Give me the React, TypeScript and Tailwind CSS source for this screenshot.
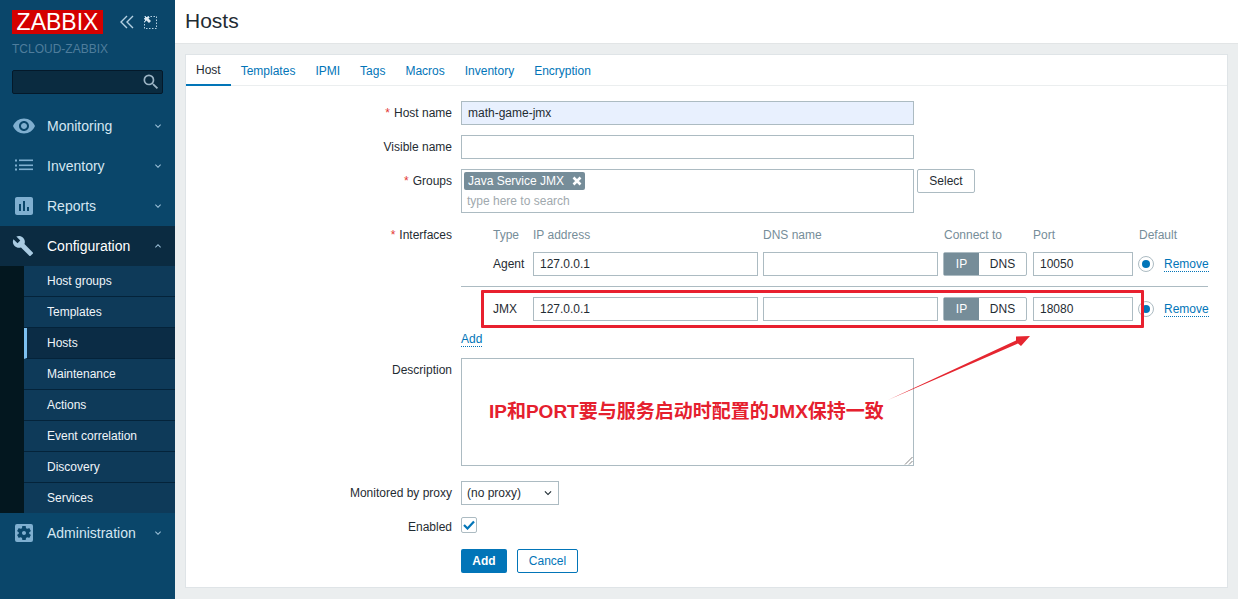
import React from "react";
import { MdVisibility, MdAssessment, MdBuild, MdSettingsApplications, MdKeyboardArrowDown, MdKeyboardArrowUp, MdSearch } from "react-icons/md";

const font = { fontFamily: '"Liberation Sans", Arial, sans-serif' };

function ListIcon() {
  return (
    <svg width="24" height="24" viewBox="0 0 24 24" fill="currentColor">
      <rect x="3" y="5.5" width="2" height="2" />
      <rect x="3" y="10.5" width="2" height="2" />
      <rect x="3" y="14.5" width="2" height="2" />
      <rect x="7" y="5.5" width="14" height="1.6" />
      <rect x="7" y="10.5" width="14" height="1.6" />
      <rect x="7" y="14.5" width="14" height="1.6" />
    </svg>
  );
}

function TopItem({ icon, label, open }: { icon: React.ReactNode; label: string; open?: boolean }) {
  return (
    <div className={`flex h-10 items-center ${open ? "bg-[#0b2b41] text-white" : "text-[#d5e6f2]"}`}>
      <div className="flex w-[47px] justify-start pl-[12px] text-[#7fafd0]">{icon}</div>
      <span className="flex-1 text-[14px]">{label}</span>
      <span className="mr-[11px] text-[#9cc0d8]">{open ? <MdKeyboardArrowUp size={12} /> : <MdKeyboardArrowDown size={12} />}</span>
    </div>
  );
}

function SubItem({ label, active, last }: { label: string; active?: boolean; last?: boolean }) {
  return (
    <div className={`flex items-center text-[12px] text-[#f0f5f9] ${last ? "h-[30px]" : "h-[31px] border-b border-[#04233a]"} ${active ? "border-l-[3px] border-l-[#7cc0f0] bg-[#0b2c45] pl-[20px]" : "bg-[#0e3a59] pl-[23px]"}`}>
      {label}
    </div>
  );
}

function Sidebar() {
  const subs = ["Host groups", "Templates", "Hosts", "Maintenance", "Actions", "Event correlation", "Discovery", "Services"];
  return (
    <aside className="flex w-[175px] shrink-0 flex-col bg-[#0a466a]">
      <div className="flex h-[70px] flex-col pl-[12px] pt-[10px]">
        <div className="flex items-center">
          <div className="flex h-[24px] w-[91px] items-center justify-center bg-[#d40000] text-[23px] leading-none text-white">ZABBIX</div>
          <svg className="ml-[17px]" width="14" height="14" viewBox="0 0 14 14" fill="none" stroke="#b5d0e2" strokeWidth="1.4">
            <path d="M7 1 L1 7 L7 13 M13 1 L7 7 L13 13" />
          </svg>
          <svg className="ml-[10px]" width="13" height="13" viewBox="0 0 13 13" fill="none">
            <rect x="0.5" y="0.5" width="12" height="12" stroke="#b5d0e2" strokeDasharray="1.5 1.5" />
            <path d="M1 1 H6 L4.5 2.5 L7 5 L5 7 L2.5 4.5 L1 6 Z" fill="#dbe8f1" />
          </svg>
        </div>
        <div className="mt-[8px] text-[12px] leading-[14px] text-[#4f7d9c]">TCLOUD-ZABBIX</div>
      </div>
      <div className="mx-[12px] flex h-[24px] items-center justify-end rounded-[2px] border border-[#04192a] bg-[#0a2b40] pr-[1px] text-[#9cb4c4]">
        <MdSearch size={20} />
      </div>
      <nav className="mt-[12px]">
        <TopItem icon={<MdVisibility size={24} />} label="Monitoring" />
        <TopItem icon={<ListIcon />} label="Inventory" />
        <TopItem icon={<MdAssessment size={24} />} label="Reports" />
        <TopItem icon={<MdBuild size={22} className="text-[#a9cbe2]" />} label="Configuration" open />
        <div className="flex bg-[#03171f] pl-[24px]">
          <div className="flex-1">
            {subs.map((s, i) => (
              <SubItem key={s} label={s} active={s === "Hosts"} last={i === subs.length - 1} />
            ))}
          </div>
        </div>
        <TopItem icon={<MdSettingsApplications size={24} />} label="Administration" />
      </nav>
    </aside>
  );
}

function Row({ label, req, className, labelPad, children }: { label: string; req?: boolean; className?: string; labelPad?: string; children: React.ReactNode }) {
  return (
    <div className={`flex ${className ?? ""}`}>
      <div className={`mr-[9px] w-[266px] shrink-0 text-right text-[12px] leading-[14px] text-[#1f2c33] ${labelPad ?? "pt-[5px]"}`}>
        {req && <span className="mr-[4px] text-[#e33734]">*</span>}
        {label}
      </div>
      <div className="flex-1">{children}</div>
    </div>
  );
}

function Text({ value, w, bg }: { value?: string; w: string; bg?: string }) {
  return <div className={`flex h-[24px] shrink-0 items-center border border-[#acbbc2] px-[6px] text-[12px] text-[#1f2c33] ${w} ${bg ?? "bg-white"}`}>{value}</div>;
}

function IfaceRow({ type, ip, port }: { type: string; ip: string; port: string }) {
  return (
    <div className="flex h-[24px] items-center pl-[32px]">
      <div className="w-[40px] shrink-0 text-[12px] text-[#1f2c33]">{type}</div>
      <Text value={ip} w="w-[225px]" />
      <Text w="w-[175px] ml-[5px]" />
      <div className="ml-[5px] flex h-[24px] w-[84px] shrink-0 rounded-[2px] border border-[#acbbc2] text-[12px]">
        <div className="flex w-[35px] items-center justify-center bg-[#768d99] text-white">IP</div>
        <div className="flex flex-1 items-center justify-center text-[#1f2c33]">DNS</div>
      </div>
      <Text value={port} w="w-[100px] ml-[6px]" />
      <div className="ml-[5px] flex h-[16px] w-[16px] shrink-0 items-center justify-center rounded-full border border-[#acbbc2] bg-white">
        <div className="h-[8px] w-[8px] rounded-full bg-[#0275b8]" />
      </div>
      <span className="ml-[10px] shrink-0 border-b border-dotted border-[#0275b8] text-[12px] leading-[14px] text-[#0275b8]">Remove</span>
    </div>
  );
}

function Form() {
  return (
    <div className="relative pt-[15px]">
      <Row label="Host name" req>
        <Text value="math-game-jmx" w="w-[453px]" bg="bg-[#e8f0fe]" />
      </Row>
      <Row label="Visible name" className="mt-[10px]">
        <Text w="w-[453px]" />
      </Row>
      <Row label="Groups" req className="mt-[10px]">
        <div className="flex">
          <div className="h-[44px] w-[453px] border border-[#acbbc2] px-[2px] pt-[2px] text-[12px]">
            <div className="flex h-[18px] w-[121px] items-center justify-between rounded-[2px] bg-[#768d99] pl-[4px] pr-[3px] text-white">
              <span>Java Service JMX</span>
              <svg width="10" height="10" viewBox="0 0 10 10" stroke="white" strokeWidth="2.6" fill="none">
                <path d="M1.5 1.5 L8.5 8.5 M8.5 1.5 L1.5 8.5" />
              </svg>
            </div>
            <div className="mt-[4px] pl-[3px] leading-[14px] text-[#9fa9ae]">type here to search</div>
          </div>
          <div className="ml-[3px] flex h-[24px] w-[58px] items-center justify-center rounded-[2px] border border-[#acbbc2] text-[12px] text-[#1f2c33]">Select</div>
        </div>
      </Row>
      <Row label="Interfaces" req className="mt-[10px]">
        <div className="w-[747px]">
          <div className="flex h-[22px] items-center pl-[32px] pt-[2px] text-[12px] leading-[14px] text-[#768d99]">
            <div className="w-[40px]">Type</div>
            <div className="w-[230px]">IP address</div>
            <div className="w-[181px]">DNS name</div>
            <div className="w-[89px]">Connect to</div>
            <div className="w-[106px]">Port</div>
            <div>Default</div>
          </div>
          <div className="mt-[7px]" />
          <IfaceRow type="Agent" ip="127.0.0.1" port="10050" />
          <div className="mb-[10px] mt-[10px] border-t border-[#acbbc2]" />
          <IfaceRow type="JMX" ip="127.0.0.1" port="18080" />
          <div className="mt-[11px] text-[12px] leading-[14px]">
            <span className="border-b border-dotted border-[#0275b8] text-[#0275b8]">Add</span>
          </div>
        </div>
      </Row>
      <Row label="Description" className="mt-[12px]">
        <div className="relative h-[108px] w-[453px] border border-[#acbbc2] bg-white">
          <svg className="absolute bottom-0 right-0" width="9" height="9" viewBox="0 0 9 9" stroke="#666" strokeWidth="0.8">
            <path d="M1 8.5 L8.5 1 M5 8.5 L8.5 5" />
          </svg>
        </div>
      </Row>
      <Row label="Monitored by proxy" className="mt-[15px]">
        <div className="flex h-[24px] w-[98px] items-center justify-between border border-[#acbbc2] pl-[5px] pr-[3px] text-[12px] text-[#1f2c33]">
          (no proxy)
          <MdKeyboardArrowDown size={14} />
        </div>
      </Row>
      <Row label="Enabled" className="mt-[12px]" labelPad="pt-[3px]">
        <div className="flex h-[16px] w-[16px] items-center justify-center rounded-[2px] border border-[#acbbc2]">
          <svg width="12" height="10" viewBox="0 0 12 10" fill="none" stroke="#0275b8" strokeWidth="2.2">
            <path d="M1 5 L4.5 8.5 L11 1.5" />
          </svg>
        </div>
      </Row>
      <Row label="" className="mt-[15px]">
        <div className="flex">
          <div className="flex h-[24px] w-[46px] items-center justify-center rounded-[2px] bg-[#0275b8] text-[12px] font-bold text-white">Add</div>
          <div className="ml-[10px] flex h-[24px] w-[61px] items-center justify-center rounded-[2px] border border-[#0275b8] text-[12px] text-[#0275b8]">Cancel</div>
        </div>
      </Row>

      <div className="absolute left-[295px] top-[204px] h-[38px] w-[663px] rounded-[1px] border-[3px] border-[#e8202f]" />
      <svg className="absolute left-[690px] top-[245px]" width="170" height="80" viewBox="0 0 170 80" fill="#e52630">
        <path d="M12 69 L140 9.5 L140 5.5 L154 5 L145 15 L142 12.5 Z" />
      </svg>
      <div
        className="absolute left-[303px] top-[315px] whitespace-nowrap text-[19px] font-bold leading-[22px] text-[#e5202e]"
        style={{ fontFamily: '"Liberation Sans", "Noto Sans CJK SC", sans-serif' }}
      >
        IP和PORT要与服务启动时配置的JMX保持一致
      </div>
    </div>
  );
}

export default function App() {
  const tabs = ["Host", "Templates", "IPMI", "Tags", "Macros", "Inventory", "Encryption"];
  return (
    <div className="flex h-[599px] w-[1238px] overflow-hidden bg-[#ebeeef]" style={font}>
      <Sidebar />
      <main className="flex-1">
        <header className="flex h-[44px] items-center border-b border-[#e2e5e6] bg-white pb-[2px] pl-[10px] text-[21px] text-[#1f2c33]">Hosts</header>
        <section className="mx-[10px] mt-[10px] h-[534px] border border-[#dfe4e7] bg-white">
          <div className="flex h-[31px] border-b border-[#ebeeef] text-[12px]">
            {tabs.map((t, i) => (
              <div key={t} className={`flex h-[31px] items-center px-[10px] ${i === 0 ? "border-b-2 border-[#0275b8] text-[#1f2c33]" : "text-[#0275b8]"}`}>
                {t}
              </div>
            ))}
          </div>
          <Form />
        </section>
      </main>
    </div>
  );
}
